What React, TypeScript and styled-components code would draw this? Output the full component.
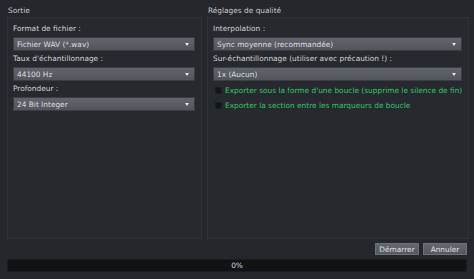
import React from "react";
import styled, { createGlobalStyle } from "styled-components";

const Global = createGlobalStyle`
  html, body { margin: 0; padding: 0; background: #24272b; }
  body { font-family: "DejaVu Sans", "Liberation Sans", sans-serif; }
  * { box-sizing: border-box; }
`;

const Window = styled.div`
  width: 474px;
  height: 279px;
  background: #24272b;
  padding: 5px 7px 7px 7px;
  display: flex;
  flex-direction: column;
  color: #d2d4d6;
  font-size: 7.4px;
  white-space: nowrap;
`;

const Columns = styled.div`
  display: grid;
  grid-template-columns: 195px 1fr;
  column-gap: 5px;
  height: 234px;
`;

const Group = styled.div`
  display: flex;
  flex-direction: column;
`;

const GroupTitle = styled.div`
  height: 12px;
  line-height: 12px;
  padding-left: 1px;
  color: #c9cbce;
`;

const GroupBox = styled.div`
  flex: 1;
  border: 1px solid #2f3337;
  background: #262a2e;
  padding: 3px 6px 0 5px;
  display: flex;
  flex-direction: column;
`;

const Label = styled.div`
  height: 16px;
  line-height: 16px;
  color: #d0d2d4;
`;

const Combo = styled.div`
  height: 14px;
  background: linear-gradient(#60656c, #52565c);
  border: 1px solid #3a3e43;
  display: flex;
  align-items: center;
  justify-content: space-between;
  padding: 0 5px 0 3px;
  color: #dcdee0;
`;

const Arrow = styled.span`
  width: 0;
  height: 0;
  border-left: 2px solid transparent;
  border-right: 2px solid transparent;
  border-top: 3px solid #e4e6e8;
`;

const CheckRow = styled.div<{ $first?: boolean }>`
  height: 15px;
  display: flex;
  align-items: center;
  gap: 3px;
  margin-top: ${(p) => (p.$first ? "2px" : "0")};
  padding-left: 2px;
  color: #35c46c;
`;

const Box = styled.span`
  flex: none;
  width: 7px;
  height: 7px;
  background: #131518;
  border: 1px solid #1c1f22;
`;

const Buttons = styled.div`
  display: flex;
  justify-content: flex-end;
  gap: 4px;
  margin-top: 4px;
  height: 12px;
`;

const Button = styled.div`
  width: 44px;
  height: 12px;
  background: linear-gradient(#62676e, #54585e);
  border: 1px solid #6c7077;
  color: #dfe1e3;
  display: flex;
  align-items: center;
  justify-content: center;
`;

const Progress = styled.div`
  margin-top: 4px;
  height: 13px;
  background: #111214;
  border: 1px solid #1a1c1f;
  display: flex;
  align-items: center;
  justify-content: center;
  color: #d6d8da;
`;

const ComboField = ({ label, value }: { label: string; value: string }) => (
  <>
    <Label>{label}</Label>
    <Combo>
      <span>{value}</span>
      <Arrow />
    </Combo>
  </>
);

export default function App() {
  return (
    <>
      <Global />
      <Window>
        <Columns>
          <Group>
            <GroupTitle>Sortie</GroupTitle>
            <GroupBox>
              <ComboField label="Format de fichier :" value="Fichier WAV (*.wav)" />
              <ComboField label="Taux d'échantillonnage :" value="44100 Hz" />
              <ComboField label="Profondeur :" value="24 Bit Integer" />
            </GroupBox>
          </Group>
          <Group>
            <GroupTitle>Réglages de qualité</GroupTitle>
            <GroupBox>
              <ComboField label="Interpolation :" value="Sync moyenne (recommandée)" />
              <ComboField
                label="Sur-échantillonnage (utiliser avec précaution !) :"
                value="1x (Aucun)"
              />
              <CheckRow $first>
                <Box />
                <span>Exporter sous la forme d'une boucle (supprime le silence de fin)</span>
              </CheckRow>
              <CheckRow>
                <Box />
                <span>Exporter la section entre les marqueurs de boucle</span>
              </CheckRow>
            </GroupBox>
          </Group>
        </Columns>
        <Buttons>
          <Button>Démarrer</Button>
          <Button>Annuler</Button>
        </Buttons>
        <Progress>0%</Progress>
      </Window>
    </>
  );
}
